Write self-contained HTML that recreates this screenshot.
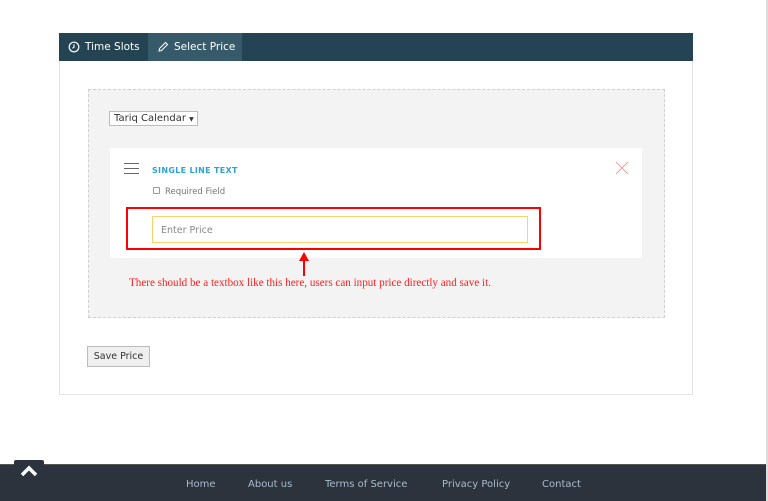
<!DOCTYPE html>
<html><head><style>
*{box-sizing:border-box;margin:0;padding:0}
body{width:768px;height:501px;position:relative;background:#fff;font-family:"DejaVu Sans","Liberation Sans",sans-serif;overflow:hidden}
.abs{position:absolute}
</style></head><body>
<div class="abs" style="left:766px;top:0;width:2px;height:501px;background:#ddd"></div>
<div class="abs" style="left:59px;top:33px;width:634px;height:28px;background:#244453"></div>
<div class="abs" style="left:148px;top:33px;width:94px;height:28px;background:#375a6b"></div>
<svg class="abs" style="left:68px;top:41px" width="12" height="12" viewBox="0 0 12 12"><circle cx="6" cy="6" r="4.8" fill="none" stroke="#fff" stroke-width="1.2"/><path d="M6 3.2V6.2L4.5 7.3" fill="none" stroke="#fff" stroke-width="1.1"/></svg>
<div class="abs" style="left:85px;top:41px;color:#fff;font-size:10.5px">Time Slots</div>
<svg class="abs" style="left:157px;top:41px" width="12" height="12" viewBox="0 0 12 12"><path d="M2 10L2.5 7.5 8.5 1.5 10.5 3.5 4.5 9.5Z" fill="none" stroke="#fff" stroke-width="1"/></svg>
<div class="abs" style="left:174px;top:41px;color:#fff;font-size:10.5px">Select Price</div>
<div class="abs" style="left:59px;top:61px;width:634px;height:334px;border:1px solid #e3e3e3;border-top:none"></div>
<div class="abs" style="left:88px;top:89px;width:577px;height:229px;background:#f3f3f3;border:1px dashed #d0d0d0"></div>
<div class="abs" style="left:109px;top:111px;width:89px;height:15px;background:#fff;border:1px solid #bbb;font-size:10px;color:#333;padding:1px 0 0 4px">Tariq Calendar <span style="font-size:6px">▼</span></div>
<div class="abs" style="left:110px;top:148px;width:532px;height:110px;background:#fff"></div>
<div class="abs" style="left:124px;top:163px;width:15px;height:1px;background:#666;box-shadow:0 5px 0 #666,0 10px 0 #666"></div>
<div class="abs" style="left:152px;top:166px;color:#2ea3d3;font-size:8px;font-weight:bold;letter-spacing:.3px">SINGLE LINE TEXT</div>
<svg class="abs" style="left:615px;top:161px" width="14" height="14"><path d="M1 1L13 13M13 1L1 13" stroke="#f5a3a3" stroke-width="1.2"/></svg>
<div class="abs" style="left:153px;top:187px;width:7px;height:7px;border:1px solid #999;border-radius:1px"></div>
<div class="abs" style="left:165px;top:187px;color:#777;font-size:8.5px">Required Field</div>
<div class="abs" style="left:126px;top:207px;width:415px;height:43px;border:2px solid #f00"></div>
<div class="abs" style="left:152px;top:216px;width:376px;height:27px;border:1px solid #fbd36e;font-size:9.5px;color:#888;padding:8px 0 0 8px">Enter Price</div>
<div class="abs" style="left:303px;top:258px;width:2px;height:18px;background:#f00"></div>
<div class="abs" style="left:299px;top:252px;width:0;height:0;border-left:5px solid transparent;border-right:5px solid transparent;border-bottom:9px solid #f00"></div>
<div class="abs" style="left:129px;top:277px;color:#f22;font-family:'Liberation Serif',serif;font-size:11.1px;white-space:nowrap">There should be a textbox like this here, users can input price directly and save it.</div>
<div class="abs" style="left:87px;top:346px;width:63px;height:21px;background:#efefef;border:1px solid #bbb;font-size:9.5px;color:#333;text-align:center;line-height:20px">Save Price</div>
<div class="abs" style="left:0;top:464px;width:766px;height:37px;background:#2c333c;border-top:1px solid #555"></div>
<div class="abs" style="left:14px;top:460px;width:30px;height:22px;background:#2c333c;border-radius:2px 2px 0 0"></div>
<svg class="abs" style="left:19px;top:464px" width="20" height="14"><path d="M3 11L10 4 17 11" fill="none" stroke="#fff" stroke-width="3.5"/></svg>
<div class="abs" style="top:479px;left:0;width:766px;font-size:10px;color:#a9bbcc">
<span class="abs" style="left:186px">Home</span>
<span class="abs" style="left:248px">About us</span>
<span class="abs" style="left:325px">Terms of Service</span>
<span class="abs" style="left:442px">Privacy Policy</span>
<span class="abs" style="left:542px">Contact</span>
</div>
</body></html>
